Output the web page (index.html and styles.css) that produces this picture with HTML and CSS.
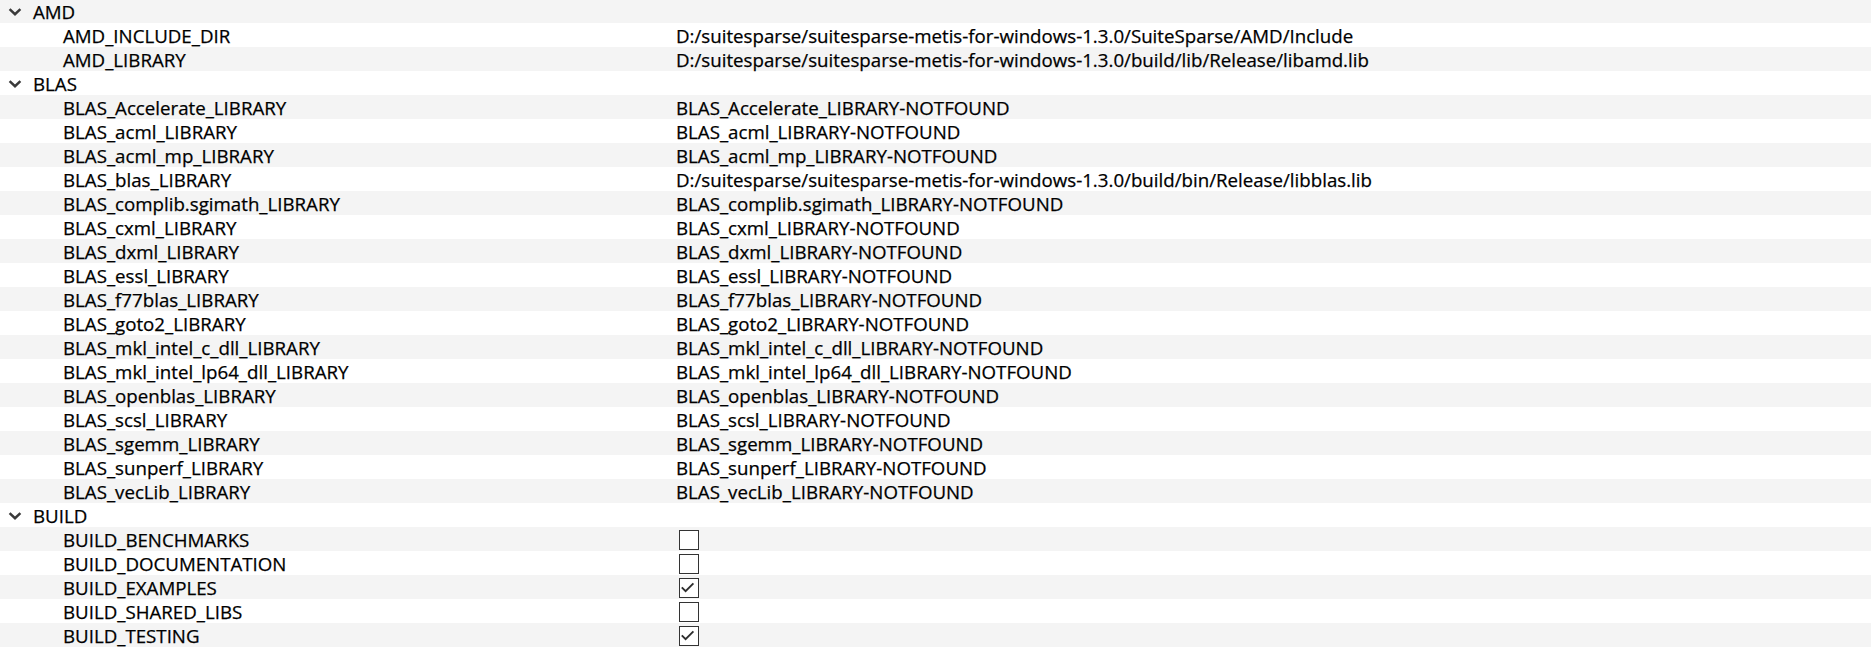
FILE: index.html
```html
<!DOCTYPE html>
<html>
<head>
<meta charset="utf-8">
<link rel="stylesheet" href="styles.css">
</head>
<body>
<div class="tree">
  <div class="row group"><div class="gname"><svg class="chev" viewBox="0 0 14 8" width="14" height="8"><path d="M1.6 1.2 L7 6.2 L12.4 1.2" fill="none" stroke="#3a3a3a" stroke-width="2.5"/></svg><span>AMD</span></div><div class="val"></div></div>
  <div class="row"><div class="key">AMD_INCLUDE_DIR</div><div class="val">D:/suitesparse/suitesparse-metis-for-windows-1.3.0/SuiteSparse/AMD/Include</div></div>
  <div class="row"><div class="key">AMD_LIBRARY</div><div class="val">D:/suitesparse/suitesparse-metis-for-windows-1.3.0/build/lib/Release/libamd.lib</div></div>
  <div class="row group"><div class="gname"><svg class="chev" viewBox="0 0 14 8" width="14" height="8"><path d="M1.6 1.2 L7 6.2 L12.4 1.2" fill="none" stroke="#3a3a3a" stroke-width="2.5"/></svg><span>BLAS</span></div><div class="val"></div></div>
  <div class="row"><div class="key">BLAS_Accelerate_LIBRARY</div><div class="val">BLAS_Accelerate_LIBRARY-NOTFOUND</div></div>
  <div class="row"><div class="key">BLAS_acml_LIBRARY</div><div class="val">BLAS_acml_LIBRARY-NOTFOUND</div></div>
  <div class="row"><div class="key">BLAS_acml_mp_LIBRARY</div><div class="val">BLAS_acml_mp_LIBRARY-NOTFOUND</div></div>
  <div class="row"><div class="key">BLAS_blas_LIBRARY</div><div class="val">D:/suitesparse/suitesparse-metis-for-windows-1.3.0/build/bin/Release/libblas.lib</div></div>
  <div class="row"><div class="key">BLAS_complib.sgimath_LIBRARY</div><div class="val">BLAS_complib.sgimath_LIBRARY-NOTFOUND</div></div>
  <div class="row"><div class="key">BLAS_cxml_LIBRARY</div><div class="val">BLAS_cxml_LIBRARY-NOTFOUND</div></div>
  <div class="row"><div class="key">BLAS_dxml_LIBRARY</div><div class="val">BLAS_dxml_LIBRARY-NOTFOUND</div></div>
  <div class="row"><div class="key">BLAS_essl_LIBRARY</div><div class="val">BLAS_essl_LIBRARY-NOTFOUND</div></div>
  <div class="row"><div class="key">BLAS_f77blas_LIBRARY</div><div class="val">BLAS_f77blas_LIBRARY-NOTFOUND</div></div>
  <div class="row"><div class="key">BLAS_goto2_LIBRARY</div><div class="val">BLAS_goto2_LIBRARY-NOTFOUND</div></div>
  <div class="row"><div class="key">BLAS_mkl_intel_c_dll_LIBRARY</div><div class="val">BLAS_mkl_intel_c_dll_LIBRARY-NOTFOUND</div></div>
  <div class="row"><div class="key">BLAS_mkl_intel_lp64_dll_LIBRARY</div><div class="val">BLAS_mkl_intel_lp64_dll_LIBRARY-NOTFOUND</div></div>
  <div class="row"><div class="key">BLAS_openblas_LIBRARY</div><div class="val">BLAS_openblas_LIBRARY-NOTFOUND</div></div>
  <div class="row"><div class="key">BLAS_scsl_LIBRARY</div><div class="val">BLAS_scsl_LIBRARY-NOTFOUND</div></div>
  <div class="row"><div class="key">BLAS_sgemm_LIBRARY</div><div class="val">BLAS_sgemm_LIBRARY-NOTFOUND</div></div>
  <div class="row"><div class="key">BLAS_sunperf_LIBRARY</div><div class="val">BLAS_sunperf_LIBRARY-NOTFOUND</div></div>
  <div class="row"><div class="key">BLAS_vecLib_LIBRARY</div><div class="val">BLAS_vecLib_LIBRARY-NOTFOUND</div></div>
  <div class="row group"><div class="gname"><svg class="chev" viewBox="0 0 14 8" width="14" height="8"><path d="M1.6 1.2 L7 6.2 L12.4 1.2" fill="none" stroke="#3a3a3a" stroke-width="2.5"/></svg><span>BUILD</span></div><div class="val"></div></div>
  <div class="row"><div class="key">BUILD_BENCHMARKS</div><div class="val"><span class="cb"></span></div></div>
  <div class="row"><div class="key">BUILD_DOCUMENTATION</div><div class="val"><span class="cb"></span></div></div>
  <div class="row"><div class="key">BUILD_EXAMPLES</div><div class="val"><span class="cb"><svg viewBox="0 0 20 20" width="20" height="20"><path d="M3.8 10.4 L7.6 14.2 L15.4 6.4" fill="none" stroke="#2e2e2e" stroke-width="1.9"/></svg></span></div></div>
  <div class="row"><div class="key">BUILD_SHARED_LIBS</div><div class="val"><span class="cb"></span></div></div>
  <div class="row"><div class="key">BUILD_TESTING</div><div class="val"><span class="cb"><svg viewBox="0 0 20 20" width="20" height="20"><path d="M3.8 10.4 L7.6 14.2 L15.4 6.4" fill="none" stroke="#2e2e2e" stroke-width="1.9"/></svg></span></div></div>
</div>
</body>
</html>
```

FILE: styles.css
```css
html, body {
  margin: 0;
  padding: 0;
  background: #ffffff;
  overflow: hidden;
}

.tree {
  margin-top: -1px;
  font-family: "Open Sans", "Liberation Sans", sans-serif;
  font-size: 18.7px;
  color: #000;
  -webkit-text-stroke: 0.25px #000;
}

.row {
  display: grid;
  grid-template-columns: 672px 1fr;
  height: 24px;
  align-items: center;
  background: #ffffff;
  white-space: nowrap;
}

.row:nth-child(odd) {
  background: #f4f4f4;
}

.gname {
  display: flex;
  align-items: center;
  padding-left: 8px;
  gap: 11px;
}

.chev {
  display: block;
  flex: none;
}

.key {
  padding-left: 63px;
}

.val {
  padding-left: 4px;
  display: flex;
  align-items: center;
}

.cb {
  display: block;
  width: 20px;
  height: 20px;
  box-sizing: border-box;
  border: 1.6px solid #333;
  margin-left: 3px;
  background: #fff;
  position: relative;
}

.cb svg {
  position: absolute;
  left: -1.6px;
  top: -1.6px;
}
```
